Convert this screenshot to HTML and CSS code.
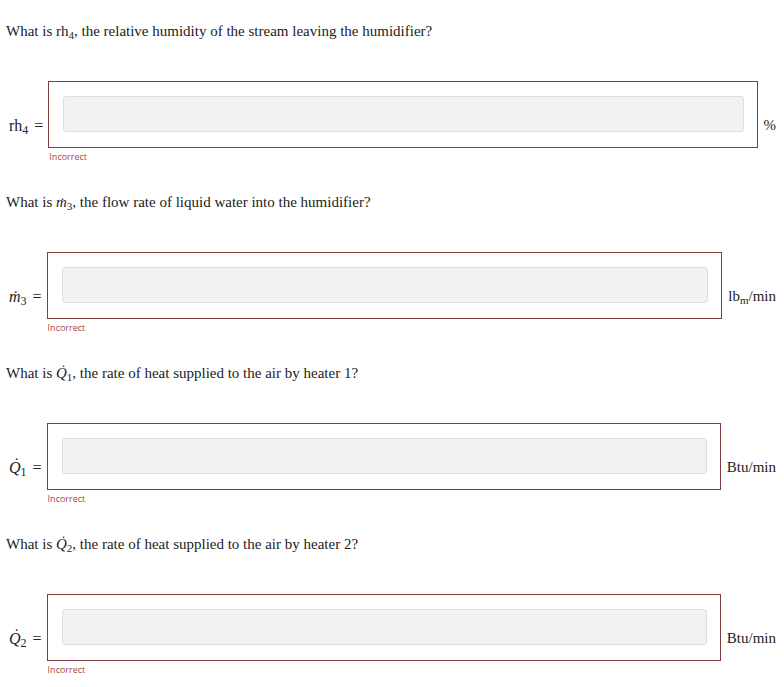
FILE: index.html
```html
<!DOCTYPE html>
<html lang="en">
<head>
    <meta charset="UTF-8">
    <meta name="viewport" content="width=device-width, initial-scale=1.0">
    <title>Humidifier questions</title>
    <link rel="stylesheet" href="styles.css">
</head>
<body>
    <div class="page">
        <div class="question">
            <p class="prompt">What is rh<sub>4</sub>, the relative humidity of the stream leaving the humidifier?</p>
            <div class="answer-row">
                <span class="label">rh<sub>4</sub><span class="eq">=</span></span>
                <div class="field">
                    <div class="box"><input type="text" class="answer"></div>
                    <div class="feedback">Incorrect</div>
                </div>
                <span class="unit">%</span>
            </div>
        </div>

        <div class="question">
            <p class="prompt">What is <span class="dot-m"><i>m</i></span><sub>3</sub>, the flow rate of liquid water into the humidifier?</p>
            <div class="answer-row">
                <span class="label"><span class="dot-m"><i>m</i></span><sub>3</sub><span class="eq">=</span></span>
                <div class="field">
                    <div class="box"><input type="text" class="answer"></div>
                    <div class="feedback">Incorrect</div>
                </div>
                <span class="unit">lb<sub>m</sub>/min</span>
            </div>
        </div>

        <div class="question">
            <p class="prompt">What is <span class="dot-q"><i>Q</i></span><sub>1</sub>, the rate of heat supplied to the air by heater 1?</p>
            <div class="answer-row">
                <span class="label"><span class="dot-q"><i>Q</i></span><sub>1</sub><span class="eq">=</span></span>
                <div class="field">
                    <div class="box"><input type="text" class="answer"></div>
                    <div class="feedback">Incorrect</div>
                </div>
                <span class="unit">Btu/min</span>
            </div>
        </div>

        <div class="question">
            <p class="prompt">What is <span class="dot-q"><i>Q</i></span><sub>2</sub>, the rate of heat supplied to the air by heater 2?</p>
            <div class="answer-row">
                <span class="label"><span class="dot-q"><i>Q</i></span><sub>2</sub><span class="eq">=</span></span>
                <div class="field">
                    <div class="box"><input type="text" class="answer"></div>
                    <div class="feedback">Incorrect</div>
                </div>
                <span class="unit">Btu/min</span>
            </div>
        </div>
    </div>
</body>
</html>
```

FILE: styles.css
```css
body {
    margin: 0;
    background-color: #fff;
    color: #222;
    font-family: 'Liberation Serif', 'Times New Roman', serif;
    font-size: 15px;
    line-height: 18px;
}
.page {
    padding: 22px 8px 0 6px;
}
.question {
    margin-bottom: 30px;
}
.prompt {
    margin: 0 0 41px 0;
}
sub {
    font-size: 11px;
    line-height: 0;
    vertical-align: -3px;
}
.dot-m,
.dot-q {
    position: relative;
}
.dot-m::after,
.dot-q::after {
    content: '\02D9';
    position: absolute;
    font-style: normal;
}
.dot-m::after {
    left: 4px;
    top: 0;
}
.dot-q::after {
    left: 5px;
    top: -4px;
}
.answer-row {
    display: flex;
    align-items: flex-start;
}
.label {
    margin: 36px 0 0 3px;
    font-size: 16px;
    white-space: nowrap;
}
.label sub {
    font-size: 12px;
}
.eq {
    margin: 0 5px 0 6px;
}
.field {
    flex: 1;
}
.box {
    border: 1px solid #7d3f3f;
    padding: 14px 13px 15px 14px;
}
.answer {
    display: block;
    box-sizing: border-box;
    width: 100%;
    height: 36px;
    margin: 0;
    border: 1px solid #dedede;
    border-radius: 3px;
    background-color: #f2f2f2;
}
.feedback {
    margin: 3px 0 0 1px;
    font-family: 'Open Sans', 'Liberation Sans', sans-serif;
    font-size: 9px;
    line-height: 12px;
    color: #a54848;
}
.unit {
    margin: 35px 0 0 6px;
    white-space: nowrap;
}
```
